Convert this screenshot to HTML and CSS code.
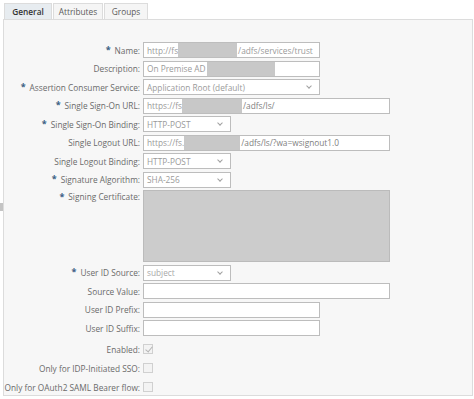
FILE: index.html
```html
<!DOCTYPE html>
<html>
<head>
<meta charset="utf-8">
<link rel="stylesheet" href="styles.css">
</head>
<body>
<div class="page">
  <div class="splitter"></div>
  <div class="tabs">
    <div class="tab tab-active t-general">General</div>
    <div class="tab t-attr">Attributes</div>
    <div class="tab t-groups">Groups</div>
  </div>
  <div class="panel">
    <div class="form">
      <div class="label"><span class="req">*</span>Name:</div>
      <div class="field w-md"><span class="val">http://fs</span><span class="redact r-name"></span><span class="val">/adfs/services/trust</span></div>

      <div class="label">Description:</div>
      <div class="field w-md"><span class="val">On Premise AD</span><span class="redact r-desc"></span></div>

      <div class="label"><span class="req">*</span>Assertion Consumer Service:</div>
      <div class="field select w-md"><span class="val">Application Root (default)</span><span class="chev"></span></div>

      <div class="label"><span class="req">*</span>Single Sign-On URL:</div>
      <div class="field w-lg"><span class="val">https://fs</span><span class="redact r-sso"></span><span class="val dark">/adfs/ls/</span></div>

      <div class="label"><span class="req">*</span>Single Sign-On Binding:</div>
      <div class="field select w-sm"><span class="val">HTTP-POST</span><span class="chev"></span></div>

      <div class="label">Single Logout URL:</div>
      <div class="field w-lg"><span class="val">https://fs.</span><span class="redact r-slo"></span><span class="val dark">/adfs/ls/?wa=wsignout1.0</span></div>

      <div class="label">Single Logout Binding:</div>
      <div class="field select w-sm"><span class="val">HTTP-POST</span><span class="chev"></span></div>

      <div class="label"><span class="req">*</span>Signature Algorithm:</div>
      <div class="field select w-sm"><span class="val">SHA-256</span><span class="chev"></span></div>

      <div class="label label-top"><span class="req">*</span>Signing Certificate:</div>
      <div class="textarea w-lg"></div>

      <div class="label"><span class="req">*</span>User ID Source:</div>
      <div class="field select w-sm"><span class="val light">subject</span><span class="chev"></span></div>

      <div class="label">Source Value:</div>
      <div class="field w-lg"></div>

      <div class="label">User ID Prefix:</div>
      <div class="field w-md"></div>

      <div class="label">User ID Suffix:</div>
      <div class="field w-md"></div>

      <div class="label cb-row cb-first">Enabled:</div>
      <div class="cb-cell cb-first"><span class="checkbox checked"></span></div>

      <div class="label cb-row">Only for IDP-Initiated SSO:</div>
      <div class="cb-cell"><span class="checkbox"></span></div>

      <div class="label cb-row">Only for OAuth2 SAML Bearer flow:</div>
      <div class="cb-cell"><span class="checkbox"></span></div>
    </div>
  </div>
</div>
</body>
</html>
```

FILE: styles.css
```css
* { box-sizing: border-box; }
html, body { margin: 0; padding: 0; background: #ffffff; }
body {
  font-family: "Open Sans", "Liberation Sans", Arial, sans-serif;
  font-size: 8.3px;
  color: #666666;
}
.page {
  position: relative;
  width: 474px;
  height: 399px;
  padding: 3px 1px 0 3px;
}
.splitter {
  position: absolute;
  left: 0;
  top: 203px;
  width: 3px;
  height: 8px;
  background: #c4c4c4;
}
.tabs {
  display: flex;
  gap: 1px;
  height: 16px;
  padding-left: 1px;
}
.tab {
  height: 16px;
  line-height: 15px;
  text-align: center;
  border: 1px solid #dcdcdc;
  border-bottom: none;
  background: #f5f5f5;
  color: #5a5a5a;
  font-size: 8.3px;
}
.t-general { width: 48px; }
.t-attr { width: 50px; }
.t-groups { width: 44px; }
.tab-active {
  background: #e7ecf0;
  color: #333333;
  font-weight: 600;
}
.panel {
  height: 377px;
  border: 1px solid #dcdcdc;
  background: #f7f7f7;
  padding-top: 22px;
}
.form {
  display: grid;
  grid-template-columns: 136px 1fr;
  column-gap: 3px;
  row-gap: 2.5px;
}
.label {
  display: flex;
  justify-content: flex-end;
  align-items: center;
  height: 16px;
  white-space: nowrap;
  color: #6a6a6a;
}
.label-top {
  align-items: flex-start;
  padding-top: 1px;
}
.req {
  color: #3a5f84;
  font-weight: 700;
  font-size: 9px;
  margin-right: 4px;
  position: relative;
  top: -1px;
}
.field {
  display: flex;
  align-items: stretch;
  height: 16px;
  border: 1px solid #bdbdbd;
  background: #ffffff;
  padding-left: 3px;
  overflow: hidden;
  white-space: nowrap;
}
.val {
  display: flex;
  align-items: center;
  color: #9a9a9a;
}
.val.dark { color: #808080; }
.val.light { color: #a8a8a8; }
.redact {
  background: #c8c8c8;
  flex: none;
}
.r-name { width: 59px; margin-right: 1px; }
.r-desc { width: 68px; margin-left: 1px; }
.r-sso { width: 60px; margin-right: 1px; }
.r-slo { width: 56px; margin-right: 1px; }
.select { justify-content: space-between; padding-right: 8px; }
.chev {
  align-self: center;
  width: 4px;
  height: 4px;
  border-right: 1px solid #a0a0a0;
  border-bottom: 1px solid #a0a0a0;
  transform: rotate(45deg);
  margin-top: -2px;
}
.w-lg { width: 247px; }
.w-md { width: 177px; }
.w-sm { width: 88px; }
.textarea {
  height: 72px;
  border: 1px solid #bbbbbb;
  background: #cccccc;
}
.cb-cell {
  display: flex;
  align-items: center;
}
.cb-first { margin-top: 2.5px; }
.cb-row, .cb-cell { height: 16.5px; }
.checkbox {
  width: 10px;
  height: 10px;
  border: 1px solid #d0d0d0;
  background: #f3f3f3;
  position: relative;
}
.checkbox.checked::after {
  content: "";
  position: absolute;
  left: 3px;
  top: 0px;
  width: 3px;
  height: 6px;
  border-right: 1px solid #b5b5b5;
  border-bottom: 1px solid #b5b5b5;
  transform: rotate(40deg);
}
```
